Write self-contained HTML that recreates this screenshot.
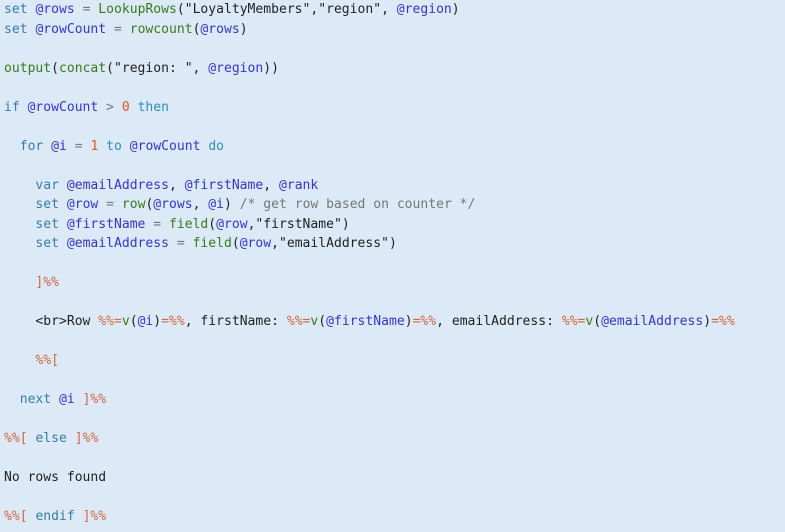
<!DOCTYPE html>
<html><head><meta charset="utf-8"><style>
html,body{margin:0;padding:0;background:#dbeaf6;width:785px;height:532px;overflow:hidden}
pre{margin:0;padding:0 0 0 4px;font-family:"DejaVu Sans Mono","Liberation Mono",monospace;font-size:13.05px;line-height:19.5px;color:#222;position:relative;top:0px}
.k{color:#3a7ca5}.t{color:#2f8fc0}.v{color:#3535cf}.f{color:#3a7a1a}.o{color:#777}.n{color:#e0561c}.c{color:#777}.p{color:#d5653f}
</style></head><body><pre><span class="k">set</span> <span class="v">@rows</span> <span class="o">=</span> <span class="f">LookupRows</span>("LoyaltyMembers","region", <span class="v">@region</span>)
<span class="k">set</span> <span class="v">@rowCount</span> <span class="o">=</span> <span class="f">rowcount</span>(<span class="v">@rows</span>)

<span class="f">output</span>(<span class="f">concat</span>("region: ", <span class="v">@region</span>))

<span class="k">if</span> <span class="v">@rowCount</span> <span class="o">&gt;</span> <span class="n">0</span> <span class="t">then</span>

  <span class="k">for</span> <span class="v">@i</span> <span class="o">=</span> <span class="n">1</span> <span class="t">to</span> <span class="v">@rowCount</span> <span class="t">do</span>

    <span class="k">var</span> <span class="v">@emailAddress</span>, <span class="v">@firstName</span>, <span class="v">@rank</span>
    <span class="k">set</span> <span class="v">@row</span> <span class="o">=</span> <span class="f">row</span>(<span class="v">@rows</span>, <span class="v">@i</span>) <span class="c">/* get row based on counter */</span>
    <span class="k">set</span> <span class="v">@firstName</span> <span class="o">=</span> <span class="f">field</span>(<span class="v">@row</span>,"firstName")
    <span class="k">set</span> <span class="v">@emailAddress</span> <span class="o">=</span> <span class="f">field</span>(<span class="v">@row</span>,"emailAddress")

    <span class="p">]%%</span>

    &lt;br&gt;Row <span class="p">%%=</span><span class="f">v</span>(<span class="v">@i</span>)<span class="p">=%%</span>, firstName: <span class="p">%%=</span><span class="f">v</span>(<span class="v">@firstName</span>)<span class="p">=%%</span>, emailAddress: <span class="p">%%=</span><span class="f">v</span>(<span class="v">@emailAddress</span>)<span class="p">=%%</span>

    <span class="p">%%[</span>

  <span class="k">next</span> <span class="v">@i</span> <span class="p">]%%</span>

<span class="p">%%[</span> <span class="k">else</span> <span class="p">]%%</span>

No rows found

<span class="p">%%[</span> <span class="k">endif</span> <span class="p">]%%</span>
</pre></body></html>
